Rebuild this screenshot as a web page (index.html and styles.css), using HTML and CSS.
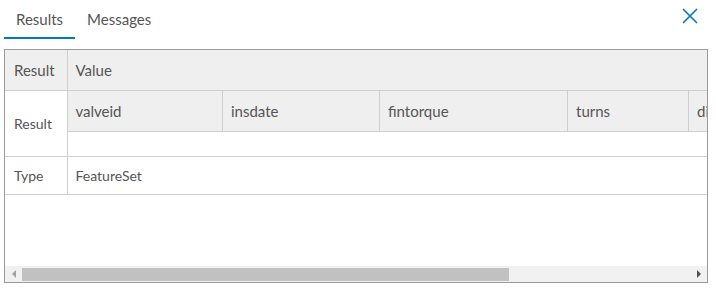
FILE: index.html
```html
<!DOCTYPE html>
<html lang="en">

<head>
    <meta charset="UTF-8">
    <title>Results</title>
    <link rel="stylesheet" href="styles.css">
</head>

<body>
    <div class="tabBar">
        <div class="tabs">
            <button class="tab active">Results</button>
            <button class="tab">Messages</button>
        </div>
        <button class="closeBtn" aria-label="Close">
            <svg width="16" height="16" viewBox="0 0 16 16">
                <path d="M1 1 L15 15 M15 1 L1 15" stroke="#0079c1" stroke-width="1.6" fill="none" />
            </svg>
        </button>
    </div>

    <div class="panel">
        <div class="tableView">
            <table class="resultTable">
                <colgroup>
                    <col class="keyCol">
                    <col>
                </colgroup>
                <tr class="headRow">
                    <th>Result</th>
                    <th>Value</th>
                </tr>
                <tr class="resultRow">
                    <td>Result</td>
                    <td class="nested">
                        <table class="fieldTable">
                            <colgroup>
                                <col style="width: 155px">
                                <col style="width: 157px">
                                <col style="width: 188px">
                                <col style="width: 121px">
                                <col style="width: 140px">
                                <col style="width: 140px">
                            </colgroup>
                            <tr class="fieldHead">
                                <th>valveid</th>
                                <th>insdate</th>
                                <th>fintorque</th>
                                <th>turns</th>
                                <th>di</th>
                                <th></th>
                            </tr>
                            <tr class="fieldBody">
                                <td></td>
                                <td></td>
                                <td></td>
                                <td></td>
                                <td></td>
                                <td></td>
                            </tr>
                        </table>
                    </td>
                </tr>
                <tr class="typeRow">
                    <td>Type</td>
                    <td>FeatureSet</td>
                </tr>
            </table>
        </div>
        <div class="scrollbar">
            <span class="arrow left"></span>
            <span class="thumb"></span>
            <span class="arrow right"></span>
        </div>
    </div>
</body>

</html>
```

FILE: styles.css
```css
body {
    margin: 0;
    font-family: Lato, "Open Sans", sans-serif;
    color: #555;
    background: #fff;
}

.tabBar {
    display: flex;
    justify-content: space-between;
    align-items: flex-start;
    padding: 0 18px 0 4px;
}

.tabs {
    display: flex;
}

.tab {
    font-family: inherit;
    font-size: 15px;
    color: #555;
    background: none;
    border: none;
    border-bottom: 2px solid transparent;
    height: 39px;
    padding: 1px 12px 0;
    cursor: pointer;
}

.tab.active {
    border-bottom-color: #0079c1;
}

.closeBtn {
    background: none;
    border: none;
    padding: 0;
    margin-top: 8px;
    width: 16px;
    height: 16px;
    cursor: pointer;
}

.closeBtn svg {
    display: block;
}

.panel {
    box-sizing: border-box;
    width: 704px;
    height: 234px;
    margin: 10px 0 0 4px;
    border: 1px solid #9a9a9a;
    display: flex;
    flex-direction: column;
}

.tableView {
    flex: 1;
    overflow: hidden;
}

.resultTable {
    border-collapse: collapse;
    table-layout: fixed;
    width: 963px;
}

.keyCol {
    width: 62px;
}

.resultTable > tbody > tr > th,
.resultTable > tbody > tr > td {
    border-bottom: 1px solid #cfcfcf;
    padding: 0 8px;
    text-align: left;
    font-weight: normal;
    white-space: nowrap;
}

.resultTable > tbody > tr > :first-child {
    border-right: 1px solid #cfcfcf;
    padding-left: 9px;
}

.headRow th {
    background: #efefef;
    height: 40px;
    font-size: 15px;
}

.resultRow td {
    font-size: 14px;
    height: 65px;
}

.resultTable > tbody > tr > td.nested {
    padding: 0;
    vertical-align: top;
}

.typeRow td {
    font-size: 14px;
    height: 37px;
}

.fieldTable {
    border-collapse: collapse;
    table-layout: fixed;
    width: 901px;
}

.fieldHead th {
    background: #efefef;
    height: 40px;
    font-size: 15px;
    font-weight: normal;
    text-align: left;
    padding: 0 8px;
    border-bottom: 1px solid #cfcfcf;
    border-right: 1px solid #cfcfcf;
    white-space: nowrap;
    overflow: hidden;
}

.fieldBody td {
    height: 24px;
    padding: 0;
}

.scrollbar {
    height: 16px;
    flex-shrink: 0;
    background: #f1f1f1;
    display: flex;
    align-items: flex-start;
}

.arrow {
    width: 17px;
    height: 16px;
    display: flex;
    justify-content: center;
    align-items: center;
}

.arrow::before {
    content: "";
    border-top: 4px solid transparent;
    border-bottom: 4px solid transparent;
}

.arrow.left::before {
    border-right: 4px solid #a3a3a3;
}

.arrow.right {
    margin-left: auto;
}

.arrow.right::before {
    border-left: 4px solid #505050;
}

.thumb {
    width: 487px;
    height: 13px;
    margin-top: 2px;
    background: #c1c1c1;
}
```
